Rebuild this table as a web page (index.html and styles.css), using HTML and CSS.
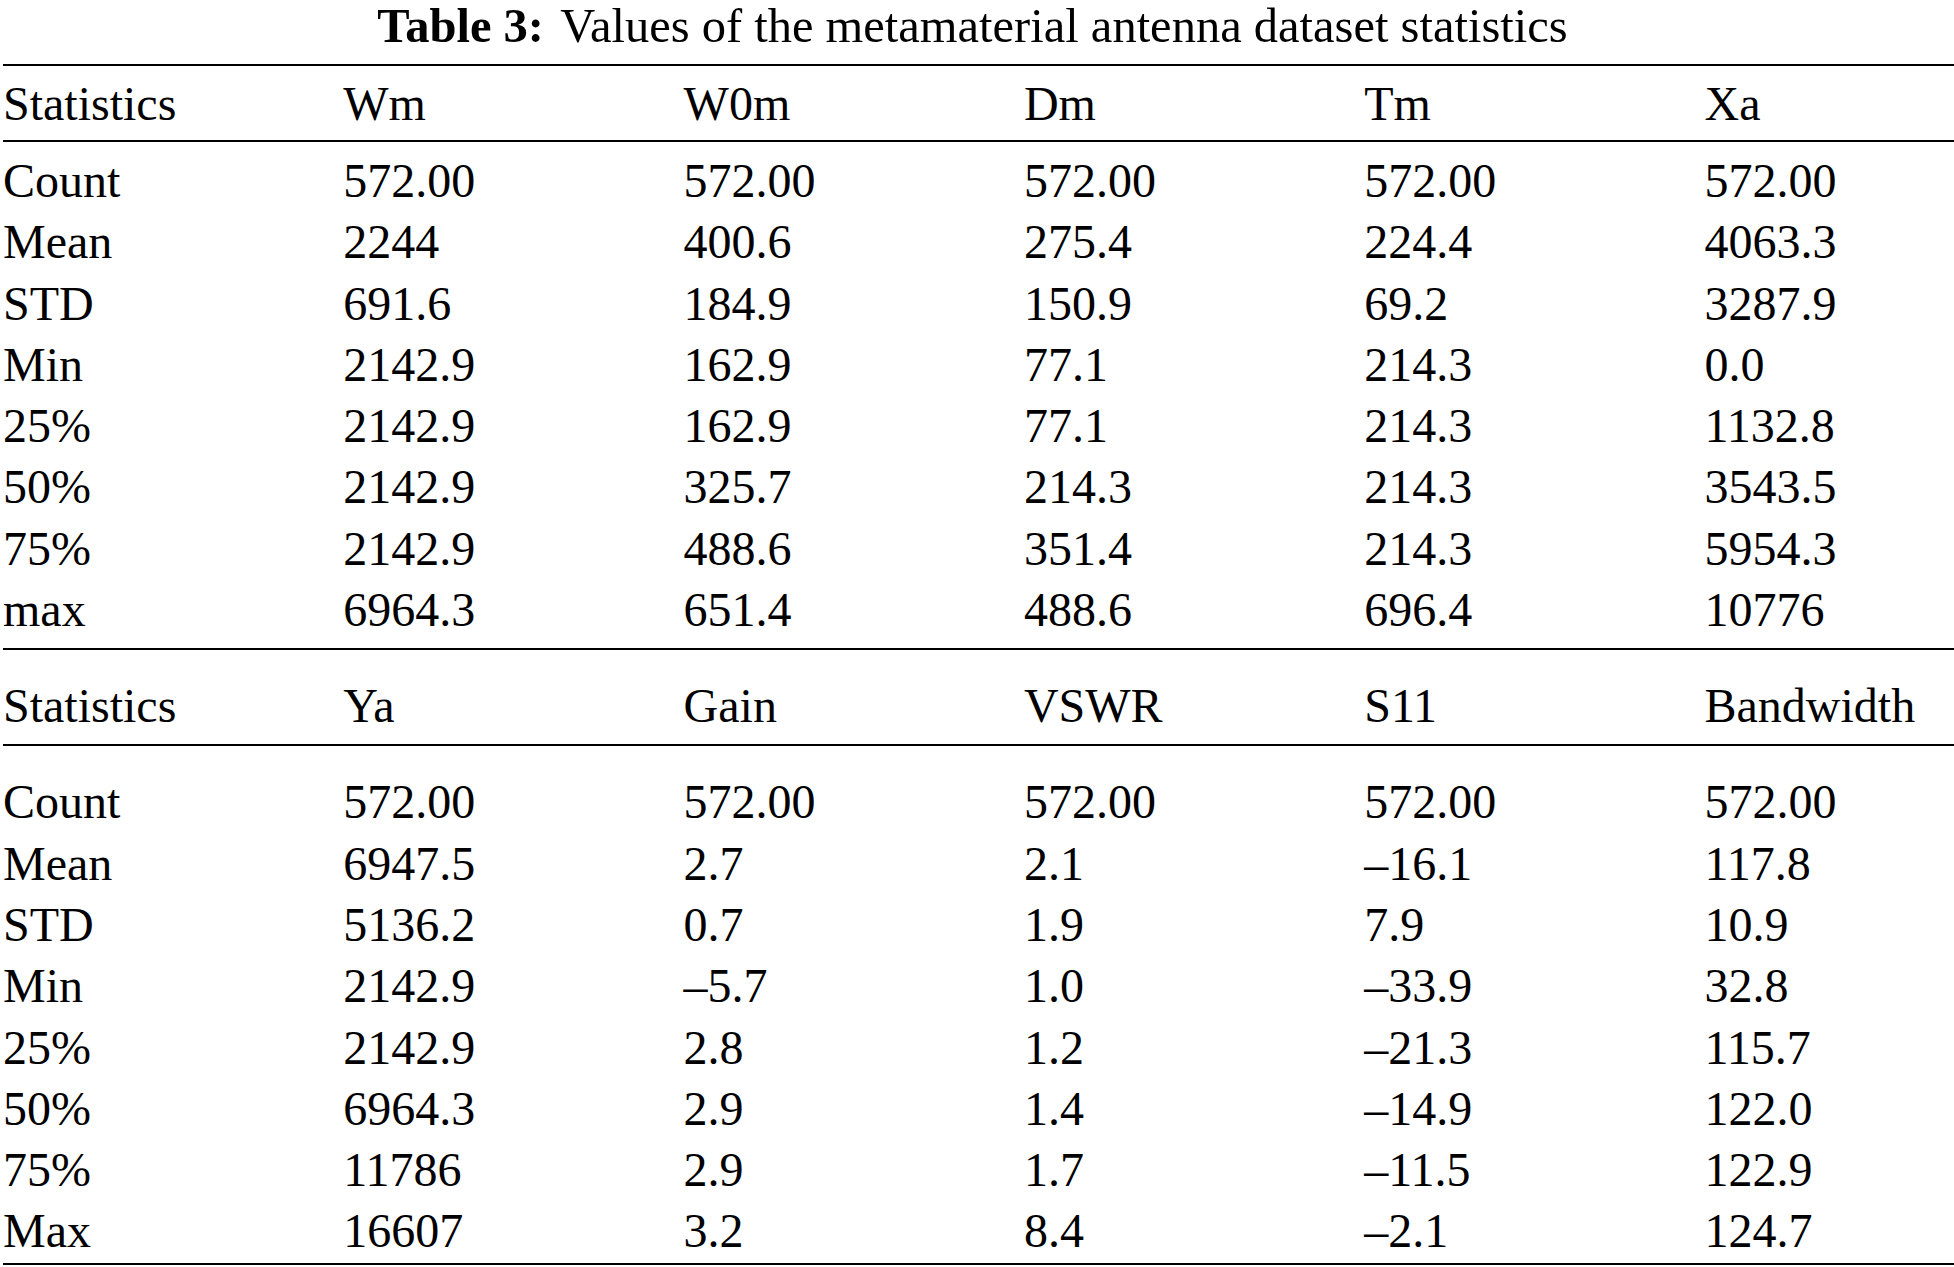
FILE: index.html
```html
<!DOCTYPE html>
<html lang="en">
<head>
<meta charset="utf-8">
<title>Table 3</title>
<link rel="stylesheet" href="styles.css">
</head>
<body>
<div class="page">
  <h1 class="caption"><b class="label">Table 3:</b> Values of the metamaterial antenna dataset statistics</h1>
  <table class="stats">
    <colgroup>
      <col class="c"><col class="c"><col class="c"><col class="c"><col class="c"><col>
    </colgroup>
    <thead>
      <tr class="head">
        <th>Statistics</th><th>Wm</th><th>W0m</th><th>Dm</th><th>Tm</th><th>Xa</th>
      </tr>
    </thead>
    <tbody>
      <tr class="first"><td>Count</td><td>572.00</td><td>572.00</td><td>572.00</td><td>572.00</td><td>572.00</td></tr>
      <tr><td>Mean</td><td>2244</td><td>400.6</td><td>275.4</td><td>224.4</td><td>4063.3</td></tr>
      <tr><td>STD</td><td>691.6</td><td>184.9</td><td>150.9</td><td>69.2</td><td>3287.9</td></tr>
      <tr><td>Min</td><td>2142.9</td><td>162.9</td><td>77.1</td><td>214.3</td><td>0.0</td></tr>
      <tr><td>25%</td><td>2142.9</td><td>162.9</td><td>77.1</td><td>214.3</td><td>1132.8</td></tr>
      <tr><td>50%</td><td>2142.9</td><td>325.7</td><td>214.3</td><td>214.3</td><td>3543.5</td></tr>
      <tr><td>75%</td><td>2142.9</td><td>488.6</td><td>351.4</td><td>214.3</td><td>5954.3</td></tr>
      <tr class="last"><td>max</td><td>6964.3</td><td>651.4</td><td>488.6</td><td>696.4</td><td>10776</td></tr>
    </tbody>
    <tbody>
      <tr class="head head2">
        <th>Statistics</th><th>Ya</th><th>Gain</th><th>VSWR</th><th>S11</th><th>Bandwidth</th>
      </tr>
    </tbody>
    <tbody>
      <tr class="first2"><td>Count</td><td>572.00</td><td>572.00</td><td>572.00</td><td>572.00</td><td>572.00</td></tr>
      <tr><td>Mean</td><td>6947.5</td><td>2.7</td><td>2.1</td><td>–16.1</td><td>117.8</td></tr>
      <tr><td>STD</td><td>5136.2</td><td>0.7</td><td>1.9</td><td>7.9</td><td>10.9</td></tr>
      <tr><td>Min</td><td>2142.9</td><td>–5.7</td><td>1.0</td><td>–33.9</td><td>32.8</td></tr>
      <tr><td>25%</td><td>2142.9</td><td>2.8</td><td>1.2</td><td>–21.3</td><td>115.7</td></tr>
      <tr><td>50%</td><td>6964.3</td><td>2.9</td><td>1.4</td><td>–14.9</td><td>122.0</td></tr>
      <tr><td>75%</td><td>11786</td><td>2.9</td><td>1.7</td><td>–11.5</td><td>122.9</td></tr>
      <tr class="last2"><td>Max</td><td>16607</td><td>3.2</td><td>8.4</td><td>–2.1</td><td>124.7</td></tr>
    </tbody>
  </table>
</div>
</body>
</html>
```
FILE: styles.css
```css
html, body {
  margin: 0;
  padding: 0;
  background: #ffffff;
}

body {
  font-family: "Liberation Serif", "Times New Roman", serif;
  font-size: 48px;
  color: #000000;
}

.page {
  padding-left: 3px;
}

.caption {
  margin: 0;
  padding: 0 12px 12px 0;
  font-size: 48.5px;
  font-weight: normal;
  line-height: 52px;
  text-align: center;
}

.caption .label {
  font-weight: bold;
  margin-right: 5px;
}

.stats {
  width: 100%;
  border-collapse: separate;
  border-spacing: 0;
  table-layout: fixed;
}

.stats col.c {
  width: 340.3px;
}

.stats th,
.stats td {
  padding: 0;
  text-align: left;
  font-weight: normal;
  line-height: 61.3px;
  white-space: nowrap;
  vertical-align: top;
}

.head th {
  border-top: 2px solid #000;
  border-bottom: 2px solid #000;
  padding-top: 7px;
  padding-bottom: 6px;
}

.head2 th {
  padding-top: 25.5px;
  padding-bottom: 7.6px;
}

.first td {
  padding-top: 7.7px;
}

.last td {
  padding-bottom: 7.3px;
}

.first2 td {
  padding-top: 25.3px;
}

.last2 td {
  padding-bottom: 1px;
  border-bottom: 2px solid #000;
}
```
